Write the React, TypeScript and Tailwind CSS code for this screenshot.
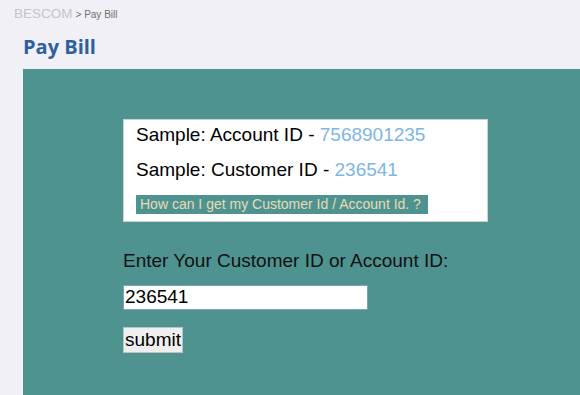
import React, { useState } from 'react';

export default function App() {
  const [customerId, setCustomerId] = useState('236541');

  return (
    <div className="w-[580px] h-[395px] overflow-hidden bg-[#f0f0f6]" style={{ fontFamily: '"Liberation Sans", Arial, sans-serif' }}>
      {/* Breadcrumb */}
      <div className="pl-[14px] pt-[4px] h-[30px] flex items-baseline">
        <span className="text-[13.5px] text-[#c4c4c8]">BESCOM</span>
        <span className="text-[10px] text-[#707070] ml-[3px]">&gt; Pay Bill</span>
      </div>

      <h1
        className="pl-[23px] h-[39px] pt-[5px] text-[20px] font-bold text-[#2f609e] leading-[24px]"
        style={{ fontFamily: '"Open Sans", "Noto Sans", sans-serif' }}
      >
        Pay Bill
      </h1>

      {/* Teal panel */}
      <div className="ml-[23px] h-[326px] bg-[#4f9391] pl-[100px] pt-[50px]">
        <div className="w-[365px] h-[103px] bg-white border border-[#c9d3d3] pl-[12px] pt-[1px] text-[19px] text-black">
          <div className="leading-[27px]">
            Sample: Account ID - <span className="text-[#80b6e2]">7568901235</span>
          </div>
          <div className="leading-[27px] mt-[8px]">
            Sample: Customer ID - <span className="text-[#80b6e2]">236541</span>
          </div>
          <div className="mt-[6px]">
            <a href="#" className="inline-block bg-[#4f9391] text-[#e6dbb4] text-[14px] leading-[19px] px-[4px] w-[292px] whitespace-nowrap">
              How can I get my Customer Id / Account Id. ?
            </a>
          </div>
        </div>

        <div className="mt-[27px] text-[19px] leading-[24px] text-[#111]">Enter Your Customer ID or Account ID:</div>

        <input
          autoFocus
          value={customerId}
          onChange={(e) => setCustomerId(e.target.value)}
          className="mt-[12px] block w-[245px] h-[25px] bg-white border border-[#7c9fc4] px-[1px] text-[19px] text-black outline-none caret-black"
        />

        <button className="mt-[17px] block h-[26px] px-[1px] bg-[#efefef] border border-[#b9c4c4] text-[19px] leading-[22px] text-black">
          submit
        </button>
      </div>
    </div>
  );
}
